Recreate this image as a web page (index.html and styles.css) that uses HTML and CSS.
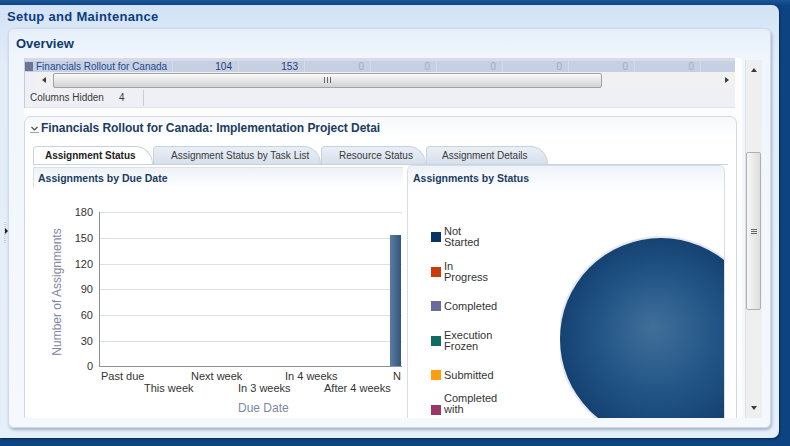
FILE: index.html
```html
<!DOCTYPE html>
<html lang="en">

<head>
    <meta charset="UTF-8">
    <meta name="viewport" content="width=device-width, initial-scale=1.0">
    <title>Setup and Maintenance</title>
    <link rel="stylesheet" href="styles.css">
</head>

<body>
    <div class="topline"></div>
    <div class="frame">
        <h1 class="page-title">Setup and Maintenance</h1>
        <div class="splitter"><span></span></div>
        <div class="overview">
            <h2 class="overview-title">Overview</h2>
            <div class="ov-body">
                <div class="ov-main">
                    <div class="table-box">
                        <div class="trow">
                            <div class="rh"></div>
                            <div class="cell name">Financials Rollout for Canada</div>
                            <div class="cell num">104</div>
                            <div class="cell num">153</div>
                            <div class="cell num zero">0</div>
                            <div class="cell num zero">0</div>
                            <div class="cell num zero">0</div>
                            <div class="cell num zero">0</div>
                            <div class="cell num zero">0</div>
                            <div class="cell num zero">0</div>
                            <div class="cell num"></div>
                        </div>
                        <div class="hscroll">
                            <span class="arr left"></span>
                            <div class="hthumb"><span class="grip"></span></div>
                            <span class="arr right"></span>
                        </div>
                        <div class="colhide">
                            <span>Columns Hidden</span>
                            <span class="cnt">4</span>
                            <span class="sep"></span>
                        </div>
                    </div>

                    <div class="detail">
                        <div class="detail-head">
                            <svg class="disclose" width="9" height="9" viewBox="0 0 9 9">
                                <polyline points="1.5,3 4.5,6 7.5,3" fill="none" stroke="#4a4a4a" stroke-width="1.2"/>
                                <line x1="0" y1="8.5" x2="9" y2="8.5" stroke="#9aa3b0" stroke-width="1"/>
                            </svg>
                            <span class="detail-title">Financials Rollout for Canada: Implementation Project Detai</span>
                        </div>
                        <div class="tabs">
                            <div class="tab active t1">Assignment Status</div>
                            <div class="tab t2">Assignment Status by Task List</div>
                            <div class="tab t3">Resource Status</div>
                            <div class="tab t4">Assignment Details</div>
                        </div>
                        <div class="tab-body">
                            <div class="panel due">
                                <div class="panel-head">Assignments by Due Date</div>
                                <svg class="due-chart" width="369" height="229" viewBox="34 189 369 229">
                                    <defs>
                                        <linearGradient id="barfill" x1="0" x2="1" y1="0" y2="0">
                                            <stop offset="0" stop-color="#5a7ca0"/>
                                            <stop offset="1" stop-color="#34567c"/>
                                        </linearGradient>
                                    </defs>
                                    <g stroke="#dcdfe5" stroke-width="1">
                                        <line x1="100" y1="213.5" x2="403" y2="213.5"/>
                                        <line x1="100" y1="239.5" x2="403" y2="239.5"/>
                                        <line x1="100" y1="265.5" x2="403" y2="265.5"/>
                                        <line x1="100" y1="290.5" x2="403" y2="290.5"/>
                                        <line x1="100" y1="316.5" x2="403" y2="316.5"/>
                                        <line x1="100" y1="342.5" x2="403" y2="342.5"/>
                                    </g>
                                    <rect x="391" y="236" width="11" height="131" fill="url(#barfill)"/>
                                    <g stroke="#8b90a0" stroke-width="1">
                                        <line x1="100.5" y1="213" x2="100.5" y2="367.5"/>
                                        <line x1="100" y1="367.5" x2="403" y2="367.5"/>
                                    </g>
                                    <g class="ylab" text-anchor="end">
                                        <text x="94" y="217">180</text>
                                        <text x="94" y="243">150</text>
                                        <text x="94" y="269">120</text>
                                        <text x="94" y="294">90</text>
                                        <text x="94" y="320">60</text>
                                        <text x="94" y="346">30</text>
                                        <text x="94" y="371">0</text>
                                    </g>
                                    <g class="xlab">
                                        <text x="102" y="381">Past due</text>
                                        <text x="145" y="393">This week</text>
                                        <text x="192" y="381">Next week</text>
                                        <text x="239" y="393">In 3 weeks</text>
                                        <text x="286" y="381">In 4 weeks</text>
                                        <text x="325" y="393">After 4 weeks</text>
                                        <text x="394" y="381">N</text>
                                    </g>
                                    <text class="axis-title" x="239" y="413">Due Date</text>
                                    <text class="axis-title" text-anchor="middle" transform="translate(62 293) rotate(-90)">Number of Assignments</text>
                                </svg>
                            </div>
                            <div class="panel status">
                                <div class="panel-head">Assignments by Status</div>
                                <div class="status-body">
                                    <ul class="legend">
                                        <li><i class="sw navy"></i><span>Not Started</span></li>
                                        <li><i class="sw red"></i><span>In Progress</span></li>
                                        <li><i class="sw slate"></i><span>Completed</span></li>
                                        <li><i class="sw teal"></i><span>Execution Frozen</span></li>
                                        <li><i class="sw orange"></i><span>Submitted</span></li>
                                        <li><i class="sw plum"></i><span class="cut">Completed with</span></li>
                                    </ul>
                                    <svg class="pie" width="164" height="230" viewBox="0 0 164 230">
                                        <defs>
                                            <radialGradient id="piefill" cx="0.5" cy="0.5" r="0.55" fx="0.46" fy="0.44">
                                                <stop offset="0" stop-color="#416f99"/>
                                                <stop offset="0.55" stop-color="#215485"/>
                                                <stop offset="1" stop-color="#113d6d"/>
                                            </radialGradient>
                                        </defs>
                                        <circle cx="101" cy="149" r="103" fill="#e4e8ee"/>
                                        <circle cx="101" cy="149" r="101" fill="url(#piefill)"/>
                                    </svg>
                                </div>
                            </div>
                        </div>
                    </div>
                </div>

                <div class="vscroll">
                    <span class="varr up"></span>
                    <div class="vthumb"><span class="vgrip"></span></div>
                    <span class="varr down"></span>
                </div>
            </div>
        </div>
    </div>
</body>

</html>
```

FILE: styles.css
```css
* {
    margin: 0;
    padding: 0;
    box-sizing: border-box;
}

body {
    width: 790px;
    height: 446px;
    overflow: hidden;
    background: #0c4380;
    font-family: "Liberation Sans", Arial, sans-serif;
    color: #333;
}

.topline {
    height: 5px;
    background: linear-gradient(#1b5597, #0d4687);
}

.frame {
    position: relative;
    width: 779px;
    height: 433px;
    background: linear-gradient(#d3e3f5, #e2edf9 60px, #e6f0fb);
    border-radius: 0 7px 7px 0;
    box-shadow: 1px 1px 2px rgba(0, 0, 0, 0.4);
}

.page-title {
    height: 23px;
    padding-left: 7px;
    font-size: 13px;
    line-height: 23px;
    letter-spacing: 0.3px;
    color: #0c3d80;
}

.splitter {
    position: absolute;
    left: 3px;
    top: 216px;
    width: 5px;
    height: 22px;
    background: repeating-linear-gradient(#fff 0 1px, #b9c6d6 1px 2px);
    background-size: 2px 100%;
    background-repeat: no-repeat;
    background-position: 1px 0;
}

.splitter span {
    position: absolute;
    left: 2px;
    top: 7px;
    border-left: 3px solid #1d1d1d;
    border-top: 3px solid transparent;
    border-bottom: 3px solid transparent;
}

.overview {
    margin-left: 8px;
    width: 763px;
    height: 400px;
    background: linear-gradient(#e6eff9, #f1f6fc 30px, #f5f9fd);
    border: 1px solid #cddaea;
    border-radius: 6px;
    box-shadow: 1px 2px 3px rgba(40, 60, 90, 0.35);
}

.overview-title {
    height: 29px;
    padding-left: 7px;
    font-size: 13px;
    line-height: 29px;
    color: #0f3b6b;
}

.ov-body {
    display: flex;
    height: 360px;
}

.ov-main {
    margin-left: 15px;
    width: 718px;
    overflow: hidden;
    background: #fdfdfe;
}

/* collapsed table */

.table-box {
    width: 711px;
    border-top: 3px solid #d6dbe5;
    border-left: 1px solid #c7ccd7;
    background: #eff0f5;
}

.trow {
    display: flex;
    height: 11px;
    background: #c7cfe2;
    font-size: 10px;
    line-height: 11px;
    white-space: nowrap;
    overflow: hidden;
}

.rh {
    flex: none;
    width: 8px;
    height: 9px;
    margin-top: 1px;
    background: #6c7592;
}

.cell {
    flex: none;
}

.name {
    width: 139px;
    padding-left: 3px;
    color: #1d4b8f;
}

.num {
    width: 66px;
    padding-right: 6px;
    text-align: right;
    color: #1f3f7a;
    border-left: 1px solid #d5dbe8;
}

.num.zero {
    color: #a3abbd;
}

.hscroll {
    display: flex;
    align-items: center;
    height: 16px;
    margin-left: 10px;
    background: #f1f1f2;
}

.arr {
    position: relative;
    width: 18px;
    height: 16px;
}

.arr::before {
    content: "";
    position: absolute;
    top: 5px;
    border-top: 3px solid transparent;
    border-bottom: 3px solid transparent;
}

.arr.left::before {
    left: 7px;
    border-right: 4px solid #3a3a3a;
}

.arr.right {
    margin-left: auto;
}

.arr.right::before {
    left: 8px;
    border-left: 4px solid #3a3a3a;
}

.hthumb {
    display: flex;
    justify-content: center;
    align-items: center;
    width: 549px;
    height: 15px;
    border: 1px solid #a3a3a3;
    border-radius: 2px;
    background: linear-gradient(#fbfbfb, #e6e6e6 50%, #d2d2d2);
}

.grip {
    width: 7px;
    height: 6px;
    background: repeating-linear-gradient(90deg, #666 0 1px, transparent 1px 3px);
}

.colhide {
    display: flex;
    align-items: center;
    height: 20px;
    padding-left: 5px;
    font-size: 10px;
    color: #3a3a3a;
    border-bottom: 1px solid #dfe2ea;
}

.cnt {
    margin-left: 15px;
}

.sep {
    width: 1px;
    height: 16px;
    margin-left: 18px;
    background: #c9ccd4;
}

/* project detail */

.detail {
    margin-top: 8px;
    width: 713px;
    height: 320px;
    border: 1px solid #d3d9e2;
    border-radius: 7px 7px 0 0;
    background: linear-gradient(#f6f8fb, #fff 22px);
}

.detail-head {
    display: flex;
    align-items: center;
    height: 22px;
    padding-left: 5px;
}

.disclose {
    margin-right: 2px;
}

.detail-title {
    font-size: 12px;
    font-weight: bold;
    letter-spacing: -0.05px;
    color: #1c3d5e;
    white-space: nowrap;
}

.tabs {
    display: flex;
    height: 18px;
    margin: 7px 0 0 8px;
}

.tab {
    height: 18px;
    font-size: 10px;
    line-height: 18px;
    white-space: nowrap;
    color: #3a3a3a;
    border: 1px solid #c8d2de;
    border-bottom: none;
    border-radius: 4px 18px 0 0 / 4px 18px 0 0;
    background: linear-gradient(#e9eff6, #d6e0eb);
}

.tab.active {
    font-weight: bold;
    color: #222;
    background: #fff;
}

.t1 {
    width: 120px;
    padding-left: 11px;
}

.t2 {
    width: 168px;
    padding-left: 17px;
}

.t3 {
    width: 105px;
    padding-left: 17px;
}

.t4 {
    width: 122px;
    padding-left: 15px;
}

.tab-body {
    display: flex;
    gap: 4px;
    margin-left: 8px;
    width: 695px;
    height: 260px;
    border-top: 1px solid #c9d2de;
}

.panel {
    overflow: hidden;
}

.panel-head {
    height: 24px;
    padding-left: 4px;
    font-size: 10.5px;
    font-weight: bold;
    line-height: 24px;
    color: #1c3d5e;
    background: linear-gradient(#edf2f8, #fff);
}

.due {
    width: 370px;
}

.due .panel-head {
    height: 21px;
    margin-top: 2px;
    line-height: 20px;
    border-top: 1px solid #dbe2ea;
    border-left: 1px solid #dbe2ea;
}

.due-chart {
    display: block;
    font-family: "Liberation Sans", Arial, sans-serif;
}

.ylab,
.xlab {
    font-size: 11px;
    fill: #333;
}

.axis-title {
    font-size: 12px;
    fill: #7d87a3;
}

.status {
    width: 318px;
    border: 1px solid #d6dde6;
    border-bottom: none;
    border-radius: 6px 6px 0 0;
}

.status .panel-head {
    padding-left: 5px;
}

.status-body {
    display: flex;
    height: 235px;
}

.legend {
    list-style: none;
    padding: 30px 0 0 23px;
    font-size: 11px;
    line-height: 11px;
}

.legend li {
    display: flex;
    align-items: center;
    height: 34.5px;
}

.legend span {
    width: 54px;
    margin-left: 3px;
}

.legend .cut {
    padding-bottom: 11px;
}

.sw {
    flex: none;
    width: 10px;
    height: 10px;
}

.navy {
    background: #0b3466;
}

.red {
    background: #cc3a0a;
}

.slate {
    background: #6a6a9c;
}

.teal {
    background: #106b62;
}

.orange {
    background: #ff9c0f;
}

.plum {
    background: #9a3766;
}

.pie {
    display: block;
    margin-left: auto;
}

/* page scrollbar */

.vscroll {
    display: flex;
    flex-direction: column;
    margin: 2px 0 0 3px;
    width: 17px;
    height: 358px;
    background: #efeff0;
    border-left: 1px solid #e2e2e4;
}

.varr {
    position: relative;
    height: 20px;
}

.varr::before {
    content: "";
    position: absolute;
    left: 5px;
    border-left: 3.5px solid transparent;
    border-right: 3.5px solid transparent;
}

.varr.up::before {
    top: 8px;
    border-bottom: 4px solid #3a3a3a;
}

.varr.down {
    margin-top: auto;
}

.varr.down::before {
    top: 8px;
    border-top: 4px solid #3a3a3a;
}

.vthumb {
    display: flex;
    justify-content: center;
    align-items: center;
    margin-top: 72px;
    width: 15px;
    height: 158px;
    border: 1px solid #aeb0b4;
    border-radius: 2px;
    background: linear-gradient(90deg, #f6f6f6, #dedede);
}

.vgrip {
    width: 6px;
    height: 5px;
    background: repeating-linear-gradient(#666 0 1px, transparent 1px 2px);
}
```
